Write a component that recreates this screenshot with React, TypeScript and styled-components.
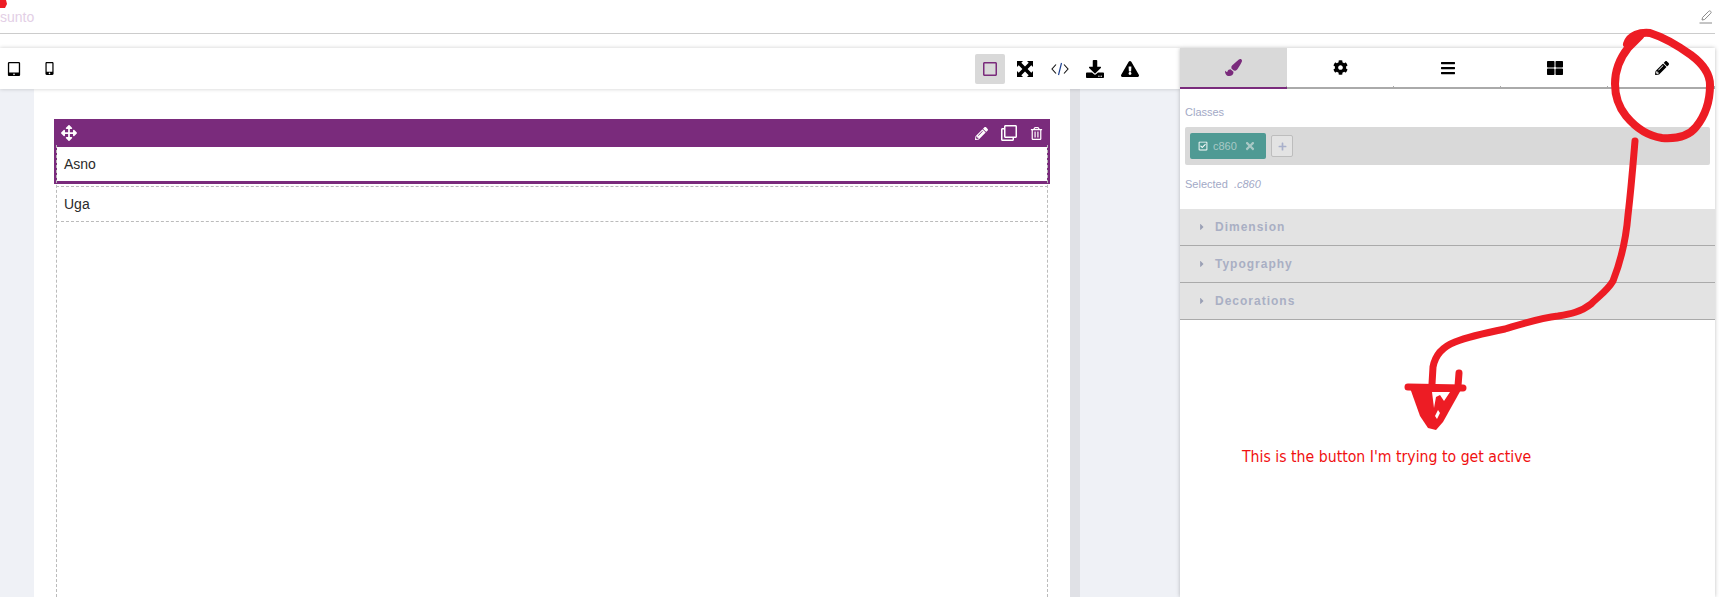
import React from 'react';
import styled, { createGlobalStyle } from 'styled-components';
import {
  FaArrowsAlt,
  FaBars,
  FaCaretRight,
  FaCog,
  FaDownload,
  FaExclamationTriangle,
  FaMobileAlt,
  FaPaintBrush,
  FaPencilAlt,
  FaPlus,
  FaRegCheckSquare,
  FaRegClone,
  FaRegSquare,
  FaRegTrashAlt,
  FaTabletAlt,
  FaThLarge,
  FaTimes,
} from 'react-icons/fa';

const PURPLE = '#7a2b7c';
const RED = '#ed1c24';

const GlobalStyle = createGlobalStyle`
  html, body {
    margin: 0;
    padding: 0;
    background: #fff;
    font-family: "Liberation Sans", Arial, sans-serif;
  }
`;

const tabs = [
  { key: 'style', icon: <FaPaintBrush size={17} /> },
  { key: 'settings', icon: <FaCog size={15} /> },
  { key: 'layers', icon: <FaBars size={16} /> },
  { key: 'blocks', icon: <FaThLarge size={16} /> },
  { key: 'edit', icon: <FaPencilAlt size={14} /> },
];

const sectors = ['Dimension', 'Typography', 'Decorations'];

const FullscreenIcon = () => (
  <svg width="16" height="16" viewBox="0 0 16 16" fill="#000">
    <path d="M0 0h6L4.3 1.7 8 5.4l3.7-3.7L10 0h6v6l-1.7-1.7L10.6 8l3.7 3.7L16 10v6h-6l1.7-1.7L8 10.6l-3.7 3.7L6 16H0v-6l1.7 1.7L5.4 8 1.7 4.3 0 6Z" />
  </svg>
);

const CodeIcon = () => (
  <svg width="18" height="14" viewBox="0 0 18 14" fill="none" stroke="#111" strokeWidth="1.1">
    <path d="M5 2.5 1 7l4 4.5M13 2.5 17 7l-4 4.5" />
    <path d="M10.5 1 7.5 13" stroke="#1b3f8f" />
  </svg>
);

const EditLineIcon = () => (
  <svg width="14" height="14" viewBox="0 0 14 14" fill="none" stroke="#8a8a8a" strokeWidth="1">
    <path d="M3 10 3.6 7.4 9.8 1.2c.5-.5 1.4-.4 1.9.2.6.6.6 1.3.1 1.8L5.6 9.5 3 10Z" />
    <path d="M.5 13h12.5" />
  </svg>
);

const Annotations = () => (
  <Overlay viewBox="0 0 1719 597" width="1719" height="597">
    <path d="M0 0h6l1 4-2 4H0Z" fill={RED} />
    <g fill="none" stroke={RED} strokeLinecap="round" strokeLinejoin="round">
      <path
        strokeWidth="8"
        d="M1627 44C1630 35 1640 32 1650 33C1663 37 1677 45 1691 55C1703 64 1710 74 1710 85C1710 101 1705 116 1696 127C1689 136 1676 139 1662 138C1648 136 1636 128 1626 116C1618 106 1615 95 1615 84C1615 71 1620 58 1628 48C1632 44 1636 40 1640 36"
      />
      <path
        strokeWidth="7"
        d="M1635 141C1633 165 1631 190 1628 215C1626 240 1622 258 1613 281C1607 291 1599 296 1591 304C1581 312 1570 314 1558 316C1540 318 1525 323 1505 329C1490 332 1470 336 1455 342C1442 347 1435 356 1433 367L1432 384"
      />
      <path strokeWidth="7" d="M1408 387L1463 388" />
      <path strokeWidth="7" d="M1459 373L1458 386" />
    </g>
    <path d="M1410 388L1462 388L1443 422L1436 430L1428 428L1420 416Z" fill={RED} />
    <path d="M1432 392L1450 392L1444 401L1440 395L1436 397L1434 408Z" fill="#fff" />
    <path d="M1435 416L1438 410L1440 413L1437 419Z" fill="#fff" />
  </Overlay>
);

const App = () => (
  <Page>
    <GlobalStyle />
    <TopBar>
      <TitleText>sunto</TitleText>
      <EditLineIcon />
    </TopBar>
    <Main>
      <EditorColumn>
        <Toolbar>
          <DeviceGroup>
            <ToolIcon $size={14}><FaTabletAlt /></ToolIcon>
            <ToolIcon $size={13}><FaMobileAlt /></ToolIcon>
          </DeviceGroup>
          <ActionGroup>
            <ActiveTool><FaRegSquare /></ActiveTool>
            <ToolIcon $size={16}><FullscreenIcon /></ToolIcon>
            <ToolIcon $size={18}><CodeIcon /></ToolIcon>
            <ToolIcon $size={18}><FaDownload /></ToolIcon>
            <ToolIcon $size={18}><FaExclamationTriangle /></ToolIcon>
          </ActionGroup>
        </Toolbar>
        <Workspace>
          <Gutter />
          <Canvas>
            <Frame>
              <SelectedHeader>
                <FaArrowsAlt size={16} />
                <HeaderActions>
                  <FaPencilAlt size={13} />
                  <FaRegClone size={16} />
                  <FaRegTrashAlt size={13} />
                </HeaderActions>
              </SelectedHeader>
              <SelectedRow>Asno</SelectedRow>
              <Row>Uga</Row>
            </Frame>
          </Canvas>
          <ScrollTrack />
          <Gutter $grow />
        </Workspace>
      </EditorColumn>
      <Panel>
        <TabBar>
          {tabs.map((tab, i) => (
            <Tab key={tab.key} $active={i === 0}>{tab.icon}</Tab>
          ))}
        </TabBar>
        <ClassSection>
          <SmallLabel>Classes</SmallLabel>
          <ClassBox>
            <ClassTag>
              <FaRegCheckSquare size={10} color="#fff" />
              <span>c860</span>
              <FaTimes size={12} color="#a9c9c6" />
            </ClassTag>
            <AddButton><FaPlus size={9} /></AddButton>
          </ClassBox>
          <SmallLabel>Selected <em>&nbsp;.c860</em></SmallLabel>
        </ClassSection>
        {sectors.map((name) => (
          <Sector key={name}>
            <FaCaretRight size={10} />
            <span>{name}</span>
          </Sector>
        ))}
        <Note>This is the button I'm trying to get active</Note>
      </Panel>
    </Main>
    <Annotations />
  </Page>
);

export default App;

const Page = styled.div`
  position: relative;
  width: 1719px;
  height: 597px;
  overflow: hidden;
  background: #fff;
`;

const Overlay = styled.svg`
  position: absolute;
  left: 0;
  top: 0;
  pointer-events: none;
`;

const TopBar = styled.div`
  height: 33px;
  box-sizing: content-box;
  border-bottom: 1px solid #ccc;
  margin-right: 4px;
  display: flex;
  align-items: center;
  justify-content: space-between;
  padding-right: 2px;
`;

const TitleText = styled.div`
  font-size: 14px;
  color: #e3cfe6;
`;

const Main = styled.div`
  margin-top: 14px;
  display: flex;
  height: 549px;
`;

const EditorColumn = styled.div`
  width: 1180px;
  display: flex;
  flex-direction: column;
`;

const Toolbar = styled.div`
  height: 41px;
  flex: none;
  display: flex;
  align-items: center;
  justify-content: space-between;
  background: #fff;
  box-shadow: 0 0 4px rgba(0, 0, 0, 0.2);
  position: relative;
`;

const DeviceGroup = styled.div`
  display: flex;
  align-items: center;
  gap: 17px;
  padding-left: 5px;
`;

const ActionGroup = styled.div`
  display: flex;
  align-items: center;
  gap: 17px;
  padding-right: 41px;
`;

const ToolIcon = styled.span<{ $size: number }>`
  display: inline-flex;
  align-items: center;
  justify-content: center;
  width: 18px;
  font-size: ${({ $size }) => $size}px;
  color: #000;
`;

const ActiveTool = styled.span`
  width: 30px;
  height: 30px;
  border-radius: 2px;
  background: #d9d9d9;
  display: inline-flex;
  align-items: center;
  justify-content: center;
  font-size: 16px;
  color: ${PURPLE};
  margin-right: -6px;
`;

const Workspace = styled.div`
  flex: 1;
  display: flex;
  min-height: 0;
`;

const Gutter = styled.div<{ $grow?: boolean }>`
  background: #eff1f6;
  ${({ $grow }) => ($grow ? 'flex: 1;' : 'width: 34px;')}
`;

const Canvas = styled.div`
  width: 1036px;
  background: #fff;
  padding: 30px 20px 0;
  box-sizing: border-box;
`;

const ScrollTrack = styled.div`
  width: 10px;
  background: #e0e1e6;
`;

const Frame = styled.div`
  position: relative;
  height: 100%;
  font-size: 14px;
  color: #2a2a2a;

  &::after {
    content: '';
    position: absolute;
    left: 2px;
    right: 2px;
    top: 26px;
    bottom: 0;
    border-left: 1px dashed #bbb;
    border-right: 1px dashed #bbb;
    pointer-events: none;
  }
`;

const SelectedHeader = styled.div`
  height: 28px;
  background: ${PURPLE};
  color: #fff;
  display: flex;
  align-items: center;
  justify-content: space-between;
  padding: 0 7px 0 7px;
`;

const HeaderActions = styled.div`
  display: flex;
  align-items: center;
  gap: 13px;
`;

const SelectedRow = styled.div`
  height: 34px;
  line-height: 34px;
  padding-left: 7px;
  margin-bottom: 2px;
  border: solid ${PURPLE};
  border-width: 0 3px 3px;
`;

const Row = styled.div`
  height: 34px;
  line-height: 34px;
  margin: 0 2px;
  padding-left: 8px;
  border-top: 1px dashed #bbb;
  border-bottom: 1px dashed #bbb;
`;

const Panel = styled.div`
  width: 535px;
  flex: none;
  background: #fff;
  box-shadow: 0 0 4px rgba(0, 0, 0, 0.25);
  position: relative;
  display: flex;
  flex-direction: column;
`;

const TabBar = styled.div`
  display: flex;
  height: 41px;
  flex: none;
`;

const Tab = styled.div<{ $active: boolean }>`
  flex: 1;
  position: relative;
  display: flex;
  align-items: center;
  justify-content: center;
  color: ${({ $active }) => ($active ? PURPLE : '#000')};
  background: ${({ $active }) => ($active ? '#d9d9d9' : '#fff')};
  border-bottom: 2px solid ${({ $active }) => ($active ? PURPLE : '#aaa')};

  &::after {
    content: '';
    position: absolute;
    right: 0;
    bottom: 0;
    width: 1px;
    height: 1px;
    background: #aaa;
  }
`;

const ClassSection = styled.div`
  padding: 17px 5px 0;
  height: 120px;
  box-sizing: border-box;
  flex: none;
`;

const SmallLabel = styled.div`
  font-size: 11px;
  line-height: 13px;
  color: #a2a9c6;

  em {
    font-style: italic;
  }
`;

const ClassBox = styled.div`
  margin: 8px 0 13px;
  height: 38px;
  background: #d9d9d9;
  border-radius: 2px;
  display: flex;
  align-items: center;
  gap: 5px;
  padding-left: 5px;
`;

const ClassTag = styled.div`
  width: 76px;
  height: 26px;
  box-sizing: border-box;
  background: #4f9a94;
  border-radius: 2px;
  display: flex;
  align-items: center;
  gap: 5px;
  padding-left: 8px;
  font-size: 11px;
  color: #a9c9c6;

  svg:last-child {
    margin-left: 2px;
  }
`;

const AddButton = styled.div`
  width: 22px;
  height: 22px;
  box-sizing: border-box;
  border: 1px solid #bdbdbd;
  border-radius: 2px;
  background: #e3e3e3;
  display: flex;
  align-items: center;
  justify-content: center;
  color: #a9b0cb;
`;

const Sector = styled.div`
  height: 37px;
  box-sizing: border-box;
  flex: none;
  background: #e3e3e3;
  border-bottom: 1px solid #aaa;
  display: flex;
  align-items: center;
  gap: 8px;
  padding-left: 17px;
  font-size: 12px;
  font-weight: 700;
  letter-spacing: 1px;
  color: #a9afc4;

  svg {
    color: #9aa0b5;
  }
`;

const Note = styled.div`
  margin: 127px 0 0 62px;
  font-family: "DejaVu Sans Condensed", "Liberation Sans", sans-serif;
  font-size: 15.7px;
  color: #f01010;
`;
